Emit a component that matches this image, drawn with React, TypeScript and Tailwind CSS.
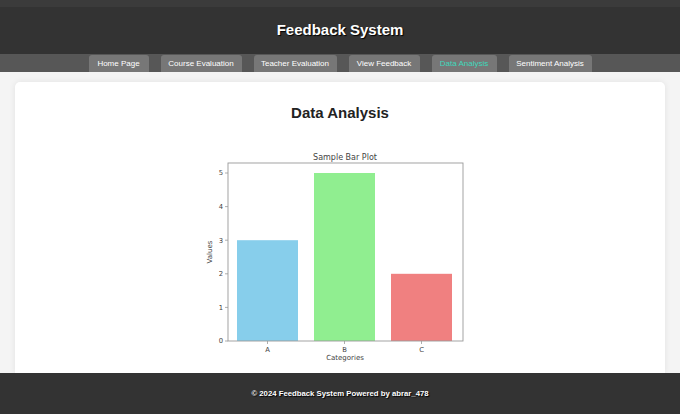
import React from 'react';

const navItems = [
  { label: 'Home Page', w: 'w-[60px]' },
  { label: 'Course Evaluation', w: 'w-[81px]' },
  { label: 'Teacher Evaluation', w: 'w-[83px]' },
  { label: 'View Feedback', w: 'w-[71px]' },
  { label: 'Data Analysis', w: 'w-[65px]', active: true },
  { label: 'Sentiment Analysis', w: 'w-[83px]' },
];

const bars = [
  { label: 'A', value: 3, color: '#87ceeb', x: 37 },
  { label: 'B', value: 5, color: '#90ee90', x: 114 },
  { label: 'C', value: 2, color: '#f08080', x: 191 },
];

// axes area inside the svg: left 28, top 15, width 235, height 178
function BarChart() {
  const left = 28;
  const top = 15;
  const bottom = 193;
  const unit = 33.6;
  return (
    <svg width="280" height="220" viewBox="0 0 280 220" style={{ fontFamily: '"DejaVu Sans", sans-serif' }}>
      <text x="145" y="12" textAnchor="middle" fontSize="8" fill="#444">Sample Bar Plot</text>
      {bars.map((b) => (
        <rect key={b.label} x={b.x} y={bottom - b.value * unit} width="61" height={b.value * unit} fill={b.color} />
      ))}
      <rect x={left} y={top} width="235" height={bottom - top} fill="none" stroke="#999" strokeWidth="0.9" />
      {[0, 1, 2, 3, 4, 5].map((v) => (
        <g key={v}>
          <line x1={left - 3} x2={left} y1={bottom - v * unit} y2={bottom - v * unit} stroke="#999" strokeWidth="0.8" />
          <text x={left - 5} y={bottom - v * unit + 2.4} textAnchor="end" fontSize="6.8" fill="#444">{v}</text>
        </g>
      ))}
      {bars.map((b) => (
        <g key={b.label}>
          <line x1={b.x + 30.5} x2={b.x + 30.5} y1={bottom} y2={bottom + 3} stroke="#999" strokeWidth="0.8" />
          <text x={b.x + 30.5} y={bottom + 11} textAnchor="middle" fontSize="6.8" fill="#444">{b.label}</text>
        </g>
      ))}
      <text x="145" y="212" textAnchor="middle" fontSize="7" fill="#444">Categories</text>
      <text x="12" y="104" textAnchor="middle" fontSize="7" fill="#444" transform="rotate(-90 12 104)">Values</text>
    </svg>
  );
}

export default function App() {
  return (
    <div className="flex h-[414px] w-[680px] flex-col overflow-hidden bg-[#f4f4f4] font-['Liberation_Sans',Arial,sans-serif]">
      <div className="h-[7px] bg-[#3b3b3b]" />
      <header className="flex h-[47px] items-center justify-center bg-[#333333]">
        <h1 className="text-[15px] font-bold text-white [text-shadow:1px_1px_1px_#000]">Feedback System</h1>
      </header>
      <nav className="flex h-[18px] items-end justify-center gap-[12px] bg-[#575757]">
        {navItems.map((n) => (
          <a
            key={n.label}
            className={`flex h-[17px] ${n.w} items-center justify-center rounded-t-[3px] bg-[#777777] text-[8px] ${n.active ? 'text-[#3fd9bd]' : 'text-white'}`}
          >
            {n.label}
          </a>
        ))}
      </nav>
      <main className="flex flex-1 flex-col px-[15px] pt-[10px]">
        <div className="flex flex-1 flex-col items-center overflow-hidden rounded-t-[5px] bg-white shadow-[0_0_6px_rgba(0,0,0,0.08)]">
          <h2 className="mt-[22px] text-[15px] leading-[18px] font-bold text-[#222222]">Data Analysis</h2>
          <div className="mt-[26px]">
            <BarChart />
          </div>
        </div>
      </main>
      <footer className="flex h-[41px] items-center justify-center bg-[#333333]">
        <p className="text-[7.75px] font-bold text-white [text-shadow:1px_1px_1px_#000]">© 2024 Feedback System Powered by abrar_478</p>
      </footer>
    </div>
  );
}
